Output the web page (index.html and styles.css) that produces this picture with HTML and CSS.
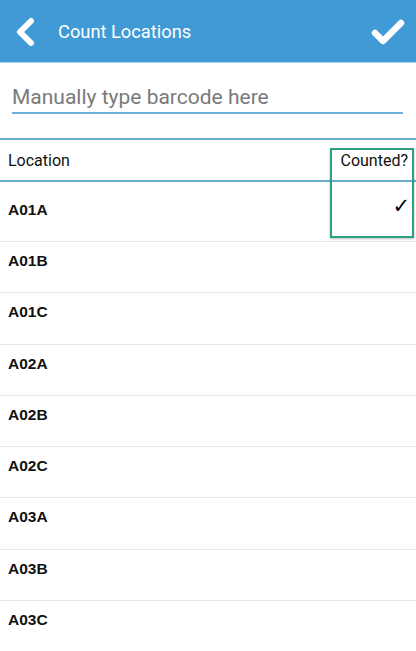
FILE: index.html
```html
<!DOCTYPE html>
<html lang="en">
<head>
    <meta charset="UTF-8">
    <meta name="viewport" content="width=device-width, initial-scale=1.0">
    <title>Count Locations</title>
    <link rel="stylesheet" href="styles.css">
</head>
<body>
    <div class="topbar">
        <svg class="back" width="22" height="30" viewBox="0 0 22 30">
            <path d="M17 4 L6 15 L17 26" fill="none" stroke="#fff" stroke-width="6" stroke-linecap="round" stroke-linejoin="round"/>
        </svg>
        <span class="title">Count Locations</span>
        <svg class="done" width="34" height="28" viewBox="0 0 34 28">
            <path d="M4 15 L12 23 L30 5" fill="none" stroke="#fff" stroke-width="6.5" stroke-linecap="round" stroke-linejoin="round"/>
        </svg>
    </div>

    <div class="scan">
        <input type="text" placeholder="Manually type barcode here">
    </div>

    <div class="list">
        <div class="list-head">
            <span>Location</span>
            <span>Counted?</span>
        </div>
        <div class="row first"><span class="loc">A01A</span><span class="tick">&#10003;</span></div>
        <div class="row"><span class="loc">A01B</span></div>
        <div class="row"><span class="loc">A01C</span></div>
        <div class="row"><span class="loc">A02A</span></div>
        <div class="row"><span class="loc">A02B</span></div>
        <div class="row"><span class="loc">A02C</span></div>
        <div class="row"><span class="loc">A03A</span></div>
        <div class="row"><span class="loc">A03B</span></div>
        <div class="row"><span class="loc">A03C</span></div>
        <!-- highlight round the counted column -->
        <div class="highlight"></div>
    </div>
</body>
</html>
```

FILE: styles.css
```css
body {
    margin: 0;
    font-family: Roboto, "Liberation Sans", sans-serif;
    background: #fff;
    overflow: hidden;
}
.topbar {
    height: 62px;
    background-color: #3f9ad6;
    border-bottom: 1px solid #a9d3ef;
    display: flex;
    align-items: center;
    padding: 0 11px 0 14px;
}
.back {
    margin-top: 1px;
}
.title {
    color: #fff;
    font-size: 18.3px;
    margin-left: 22px;
    flex: 1;
}
.done {
    margin-top: 2px;
}
.scan {
    padding: 20px 13px 0 12px;
    height: 58px;
    box-sizing: border-box;
}
.scan input {
    width: 100%;
    box-sizing: border-box;
    border: none;
    border-bottom: 2px solid #6cb0dc;
    outline: none;
    font-family: Roboto, sans-serif;
    font-size: 21px;
    padding: 0 0 2px 0;
    height: 31px;
    color: #333;
}
.scan input::placeholder {
    color: #7a7a7a;
}
.list {
    position: relative;
    margin-top: 17px;
    border-top: 2px solid #66adcf;
}
.list-head {
    display: flex;
    justify-content: space-between;
    align-items: center;
    height: 40px;
    padding: 0 8px 0 8px;
    font-size: 16px;
    color: #111;
    border-bottom: 2px solid #66adcf;
}
.row {
    display: flex;
    justify-content: space-between;
    align-items: flex-start;
    height: 51.3px;
    box-sizing: border-box;
    padding: 10px 8px 0 8px;
    border-bottom: 1px solid #e9e9e9;
    font-family: "Liberation Sans", Arial, sans-serif;
    line-height: 18px;
}
.row.first {
    height: 60px;
    padding-top: 19px;
}
.loc {
    font-weight: bold;
    font-size: 15.5px;
    color: #111;
}
.tick {
    font-family: "DejaVu Sans", sans-serif;
    font-size: 21px;
    font-weight: bold;
    color: #000;
    margin-top: -4px;
    margin-right: -2px;
}
.highlight {
    position: absolute;
    left: 330px;
    top: 8px;
    width: 84px;
    height: 90px;
    box-sizing: border-box;
    border: 2px solid #2aa184;
    box-shadow: 0 1px 2px rgba(0, 0, 0, 0.25);
}
```
